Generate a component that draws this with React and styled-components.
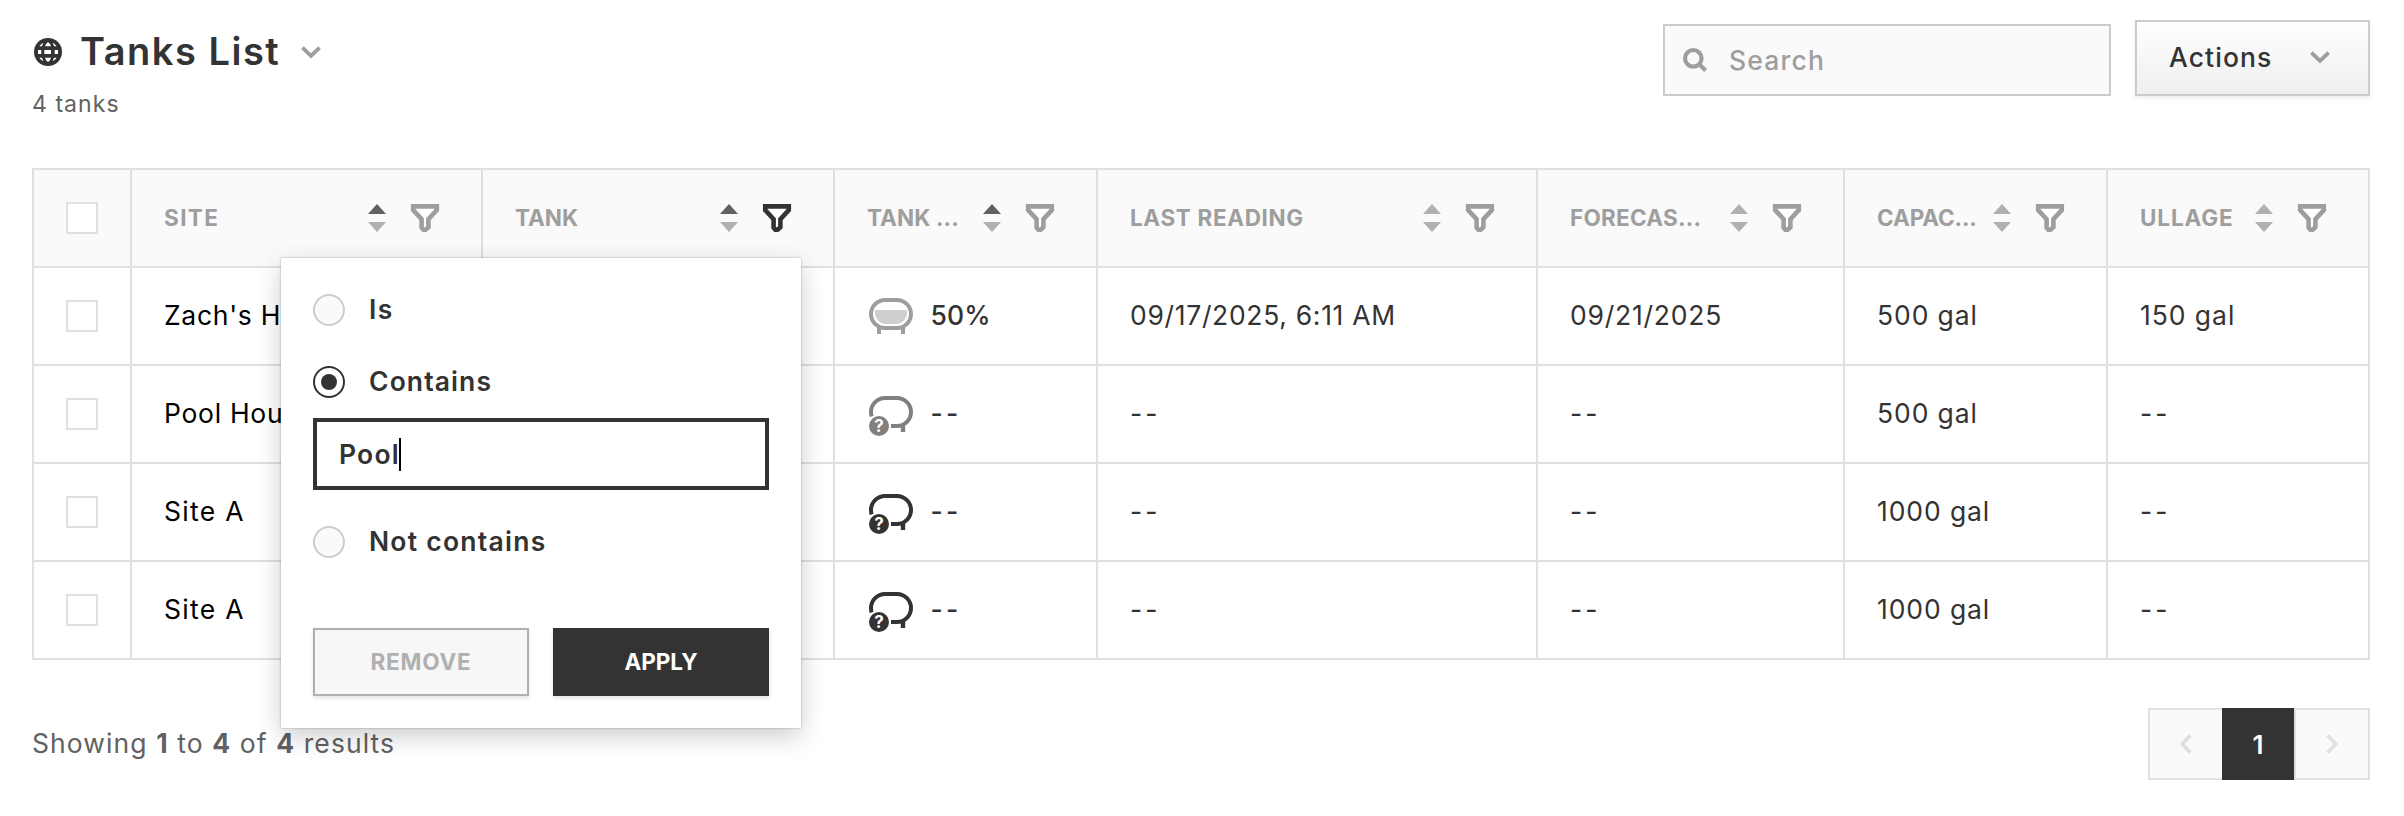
import React from 'react';
import styled, { createGlobalStyle } from 'styled-components';

const GlobalStyle = createGlobalStyle`
  * { box-sizing: border-box; }
  body {
    margin: 0;
    background: #fff;
    color: #333;
    font-family: Inter, 'Open Sans', sans-serif;
    font-size: 26.5px;
    line-height: 32px;
  }
  button { font-family: inherit; margin: 0; cursor: pointer; }
`;

const Page = styled.main`
  width: 2404px;
  height: 816px;
  padding: 0 34px 0 32px;
  overflow: hidden;
`;

const Text = styled.span`
  white-space: pre;
  letter-spacing: ${(p) => p.$track ?? 1.5}px;
`;

const BodyText = styled(Text)`
  padding-bottom: 2px;
`;

const Icon = styled.svg`
  display: block;
  flex: none;
  overflow: visible;
`;

/* Header */
const Header = styled.header`
  display: flex;
  justify-content: space-between;
  align-items: flex-start;
  height: 168px;
`;

const TitleBlock = styled.div`
  padding-top: 26px;
`;

const TitleRow = styled.div`
  display: flex;
  align-items: center;
  height: 52px;
  padding-left: 2px;
`;

const Title = styled.h1`
  width: 219px;
  margin: 0 20px 0 0;
  padding: 0 0 1px 18px;
  font-size: 38px;
  font-weight: 600;
  line-height: 51px;
`;

const Count = styled.p`
  margin: 10px 0 0;
  font-size: 23px;
  line-height: 32px;
  color: #616161;
`;

const Tools = styled.div`
  display: flex;
  gap: 24px;
  padding-top: 20px;
`;

const SearchBox = styled.label`
  display: flex;
  align-items: center;
  gap: 22px;
  width: 448px;
  height: 72px;
  margin-top: 4px;
  padding: 0 18px;
  border: 2px solid #ccc;
  background: #fafafa;
  color: #9e9e9e;
  font-weight: 550;
`;

const ActionsButton = styled.button`
  display: flex;
  align-items: center;
  justify-content: space-between;
  width: 235px;
  height: 76px;
  padding: 0 38px 2px 32px;
  border: 2px solid #ccc;
  background: linear-gradient(#fff, #eee);
  box-shadow: 0 2px 4px rgba(0, 0, 0, 0.08);
  color: #333;
  font-size: 26.5px;
  font-weight: 550;
`;

/* Table */
const Table = styled.div`
  display: grid;
  grid-template-columns: 98px 351px 352px 263px 440px 307px 263px 262px;
  width: 2338px;
  border-right: 2px solid #e0e0e0;
  border-bottom: 2px solid #e0e0e0;
`;

const Cell = styled.div`
  display: flex;
  align-items: center;
  height: 98px;
  padding-left: 32px;
  border-top: 2px solid #e0e0e0;
  border-left: 2px solid #e0e0e0;
  color: ${(p) => (p.$link ? '#000' : '#333')};
  font-weight: ${(p) => (p.$strong ? 550 : 400)};
`;

const HeadCell = styled(Cell)`
  padding-right: 42px;
  background: #fafafa;
  color: #9e9e9e;
  font-size: 22.5px;
  font-weight: 680;
`;

const CheckCell = styled(Cell)`
  background: ${(p) => (p.$head ? '#fafafa' : '#fff')};
`;

const Checkbox = styled.span`
  width: 32px;
  height: 32px;
  border: 2px solid #e0e0e0;
  background: #fff;
`;

const Sorter = styled.span`
  margin: 0 25px 0 auto;
`;

const FilterAnchor = styled.span`
  position: relative;
  color: ${(p) => (p.$active ? '#333' : '#9e9e9e')};
`;

const Level = styled.div`
  display: flex;
  align-items: center;
  gap: 17.5px;
  padding-left: 2px;
  color: ${(p) => p.$tone};
`;

const LevelText = styled(BodyText)`
  color: #333;
`;

/* Filter popover */
const Popover = styled.form`
  position: absolute;
  z-index: 2;
  top: 54px;
  right: -10px;
  width: 520px;
  height: 470px;
  padding: 36px 32px 32px;
  background: #fff;
  box-shadow: 0 0 2px rgba(0, 0, 0, 0.3), 0 8px 24px rgba(0, 0, 0, 0.2);
  color: #333;
  font-size: 26.5px;
  font-weight: 560;
`;

const Option = styled.label`
  display: flex;
  align-items: center;
  gap: 24px;
  height: 32px;
  margin-bottom: ${(p) => p.$gap}px;
`;

const Radio = styled.span`
  display: grid;
  place-items: center;
  width: 32px;
  height: 32px;
  border: 2px solid ${(p) => (p.$on ? '#333' : '#ccc')};
  border-radius: 50%;
  background: ${(p) => (p.$on ? '#fff' : '#fafafa')};
  &::after {
    content: '';
    width: 16px;
    height: 16px;
    border-radius: 50%;
    background: ${(p) => (p.$on ? '#333' : 'transparent')};
  }
`;

const Field = styled.div`
  display: flex;
  align-items: center;
  height: 72px;
  margin-bottom: 36px;
  padding-left: 22px;
  border: 4px solid #333;
  background: #fff;
`;

const Caret = styled.span`
  width: 2px;
  height: 33px;
  margin-left: -1px;
  background: #000;
`;

const Buttons = styled.div`
  display: grid;
  grid-template-columns: 1fr 1fr;
  gap: 24px;
`;

const FormButton = styled.button`
  height: 68px;
  padding: 0 0 2px;
  border: 2px solid ${(p) => (p.$primary ? '#333' : '#b0b0b0')};
  background: ${(p) => (p.$primary ? '#333' : '#f7f7f7')};
  box-shadow: 0 2px 4px rgba(0, 0, 0, 0.12);
  color: ${(p) => (p.$primary ? '#fff' : '#b0b0b0')};
  font-size: 22.5px;
  font-weight: 680;
`;

/* Footer */
const Footer = styled.footer`
  display: flex;
  justify-content: space-between;
  align-items: center;
  height: 72px;
  margin-top: 48px;
  color: #616161;
  b { font-weight: 700; }
`;

const Pager = styled.nav`
  display: flex;
`;

const PageButton = styled.button`
  display: flex;
  align-items: center;
  justify-content: center;
  width: ${(p) => p.$width}px;
  height: 72px;
  padding: 0;
  border: 2px solid ${(p) => (p.$current ? '#333' : '#e0e0e0')};
  border-right-width: ${(p) => (p.$openRight ? 0 : 2)}px;
  background: ${(p) => (p.$current ? '#333' : '#fafafa')};
  color: ${(p) => (p.$current ? '#fff' : '#e0e0e0')};
  font-size: 26px;
  font-weight: 600;
`;

/* Icons */
const GlobeIcon = () => (
  <Icon width="28" height="28" viewBox="0 0 28 28">
    <circle cx="14" cy="14" r="14" fill="#333" />
    <g fill="#fff">
      <path d="M4 12H7.3V16H4Z M10.3 12H17V16H10.3Z M20.7 12H24V16H20.7Z" />
      <path d="M11 8.3C11.5 6.4 12.5 5 14 3.9C15.5 5 16.5 6.4 17 8.3Z" />
      <path d="M11 19.7C11.5 21.6 12.5 23 14 24.1C15.5 23 16.5 21.6 17 19.7Z" />
      <path d="M5.4 8.3C6.4 6.8 7.6 5.6 9.3 4.8L8 8.3Z M22.6 8.3C21.6 6.8 20.4 5.6 18.7 4.8L20 8.3Z" />
      <path d="M5.4 19.7C6.4 21.2 7.6 22.4 9.3 23.2L8 19.7Z M22.6 19.7C21.6 21.2 20.4 22.4 18.7 23.2L20 19.7Z" />
    </g>
  </Icon>
);

const ChevronDown = () => (
  <Icon width="20" height="12" viewBox="0 0 20 12">
    <path d="M1.4 1.6L10 9.8L18.6 1.6" fill="none" stroke="#9e9e9e" strokeWidth="3.8" />
  </Icon>
);

const ChevronSide = ({ right }) => (
  <Icon width="12" height="20" viewBox="0 0 12 20">
    <path
      d={right ? 'M1.6 1.4L9.8 10L1.6 18.6' : 'M10.4 1.4L2.2 10L10.4 18.6'}
      fill="none"
      stroke="currentColor"
      strokeWidth="3.8"
    />
  </Icon>
);

const SearchIcon = () => (
  <Icon width="24" height="24" viewBox="0 0 24 24">
    <g fill="none" stroke="currentColor" strokeWidth="4.2">
      <circle cx="10.3" cy="10.3" r="8.3" />
      <path d="M15.6 15.6L22.6 22.6" />
    </g>
  </Icon>
);

const SortIcon = ({ sorted }) => (
  <Icon width="18" height="28" viewBox="0 0 18 28">
    <path d="M0 10L9 0L18 10Z" fill={sorted ? '#616161' : '#b0b0b0'} />
    <path d="M0 18L9 28L18 18Z" fill="#b0b0b0" />
  </Icon>
);

const FilterIcon = () => (
  <Icon width="28" height="28" viewBox="0 0 28 28">
    <path
      d="M2.2 2.4H25.8V6L17.4 15.2V23.2L14.6 25.8H12.4L10.6 23.6V15.2L2.2 6Z"
      fill="#fff"
      stroke="currentColor"
      strokeWidth="4.6"
    />
  </Icon>
);

const TankIcon = () => (
  <Icon width="44" height="36" viewBox="0 0 44 36">
    <path d="M6 12H38V14C38 20.5 33.5 26 27 26H17C10.5 26 6 20.5 6 14Z" fill="#cfcfcf" />
    <rect x="2" y="2" width="40" height="28" rx="14" fill="none" stroke="currentColor" strokeWidth="4" />
    <path d="M10 30V36M34 30V36" stroke="currentColor" strokeWidth="4" />
  </Icon>
);

const UnknownTankIcon = () => (
  <Icon width="44" height="36" viewBox="0 0 44 36">
    <path
      d="M2.6 20.5C2.2 19 2 17.5 2 16A14 14 0 0 1 16 2H28A14 14 0 0 1 28 30H22"
      fill="none"
      stroke="currentColor"
      strokeWidth="4"
    />
    <path d="M34 28V36" stroke="currentColor" strokeWidth="4.4" />
    <circle cx="10" cy="30" r="11.6" fill="#fff" />
    <circle cx="10" cy="30" r="10" fill="currentColor" />
    <text x="10" y="36.2" textAnchor="middle" fontSize="17" fontWeight="700" fill="#fff">?</text>
  </Icon>
);

const FilterPopover = () => (
  <Popover>
    <Option $gap={40}><Radio /><BodyText $track={1.5}>Is</BodyText></Option>
    <Option $gap={20}><Radio $on /><BodyText $track={1.1}>Contains</BodyText></Option>
    <Field><Text $track={1.2}>Pool</Text><Caret /></Field>
    <Option $gap={70}><Radio /><BodyText $track={1.25}>Not contains</BodyText></Option>
    <Buttons>
      <FormButton type="button"><Text $track={0.8}>REMOVE</Text></FormButton>
      <FormButton type="button" $primary><Text $track={0}>APPLY</Text></FormButton>
    </Buttons>
  </Popover>
);

const COLUMNS = [
  { label: 'SITE', track: 1.4, sorted: true },
  { label: 'TANK', track: 0, sorted: true, filtering: true },
  { label: 'TANK ...', track: 0.1, sorted: true },
  { label: 'LAST READING', track: 0.65 },
  { label: 'FORECAS...', track: 0.25 },
  { label: 'CAPAC...', track: -0.1 },
  { label: 'ULLAGE', track: 0.85 },
];

const ROWS = [
  { site: "Zach's House", level: '50%', tone: '#9e9e9e', reading: '09/17/2025, 6:11 AM', forecast: '09/21/2025', capacity: '500 gal', ullage: '150 gal' },
  { site: 'Pool House', level: '--', tone: '#808080', reading: '--', forecast: '--', capacity: '500 gal', ullage: '--' },
  { site: 'Site A', level: '--', tone: '#333', reading: '--', forecast: '--', capacity: '1000 gal', ullage: '--' },
  { site: 'Site A', level: '--', tone: '#333', reading: '--', forecast: '--', capacity: '1000 gal', ullage: '--' },
];

const Value = ({ children, track }) => (
  <BodyText $track={children === '--' ? 3 : track}>{children}</BodyText>
);

const TankRow = ({ row }) => (
  <>
    <CheckCell><Checkbox /></CheckCell>
    <Cell $link><BodyText $track={row.site === 'Site A' ? 1.3 : 0.7}>{row.site}</BodyText></Cell>
    <Cell />
    <Cell $strong>
      <Level $tone={row.tone}>
        {row.level === '--' ? <UnknownTankIcon /> : <TankIcon />}
        <LevelText $track={row.level === '--' ? 3.3 : 0.1}>{row.level}</LevelText>
      </Level>
    </Cell>
    <Cell><Value track={0.68}>{row.reading}</Value></Cell>
    <Cell><Value track={0.78}>{row.forecast}</Value></Cell>
    <Cell><Value track={0.9}>{row.capacity}</Value></Cell>
    <Cell><Value track={0.95}>{row.ullage}</Value></Cell>
  </>
);

export default function App() {
  return (
    <Page>
      <GlobalStyle />
      <Header>
        <TitleBlock>
          <TitleRow>
            <GlobeIcon />
            <Title><Text $track={1.5}>Tanks List</Text></Title>
            <ChevronDown />
          </TitleRow>
          <Count><Text $track={1.05}>4 tanks</Text></Count>
        </TitleBlock>
        <Tools>
          <SearchBox><SearchIcon /><Text $track={1.2}>Search</Text></SearchBox>
          <ActionsButton type="button"><Text $track={1.1}>Actions</Text><ChevronDown /></ActionsButton>
        </Tools>
      </Header>

      <Table>
        <CheckCell $head><Checkbox /></CheckCell>
        {COLUMNS.map((c) => (
          <HeadCell key={c.label}>
            <Text $track={c.track}>{c.label}</Text>
            <Sorter><SortIcon sorted={c.sorted} /></Sorter>
            <FilterAnchor $active={c.filtering}>
              <FilterIcon />
              {c.filtering && <FilterPopover />}
            </FilterAnchor>
          </HeadCell>
        ))}
        {ROWS.map((row, i) => <TankRow key={i} row={row} />)}
      </Table>

      <Footer>
        <BodyText $track={1.08}>Showing <b>1</b> to <b>4</b> of <b>4</b> results</BodyText>
        <Pager>
          <PageButton type="button" $width={74} $openRight><ChevronSide /></PageButton>
          <PageButton type="button" $width={72} $current>1</PageButton>
          <PageButton type="button" $width={76}><ChevronSide right /></PageButton>
        </Pager>
      </Footer>
    </Page>
  );
}
